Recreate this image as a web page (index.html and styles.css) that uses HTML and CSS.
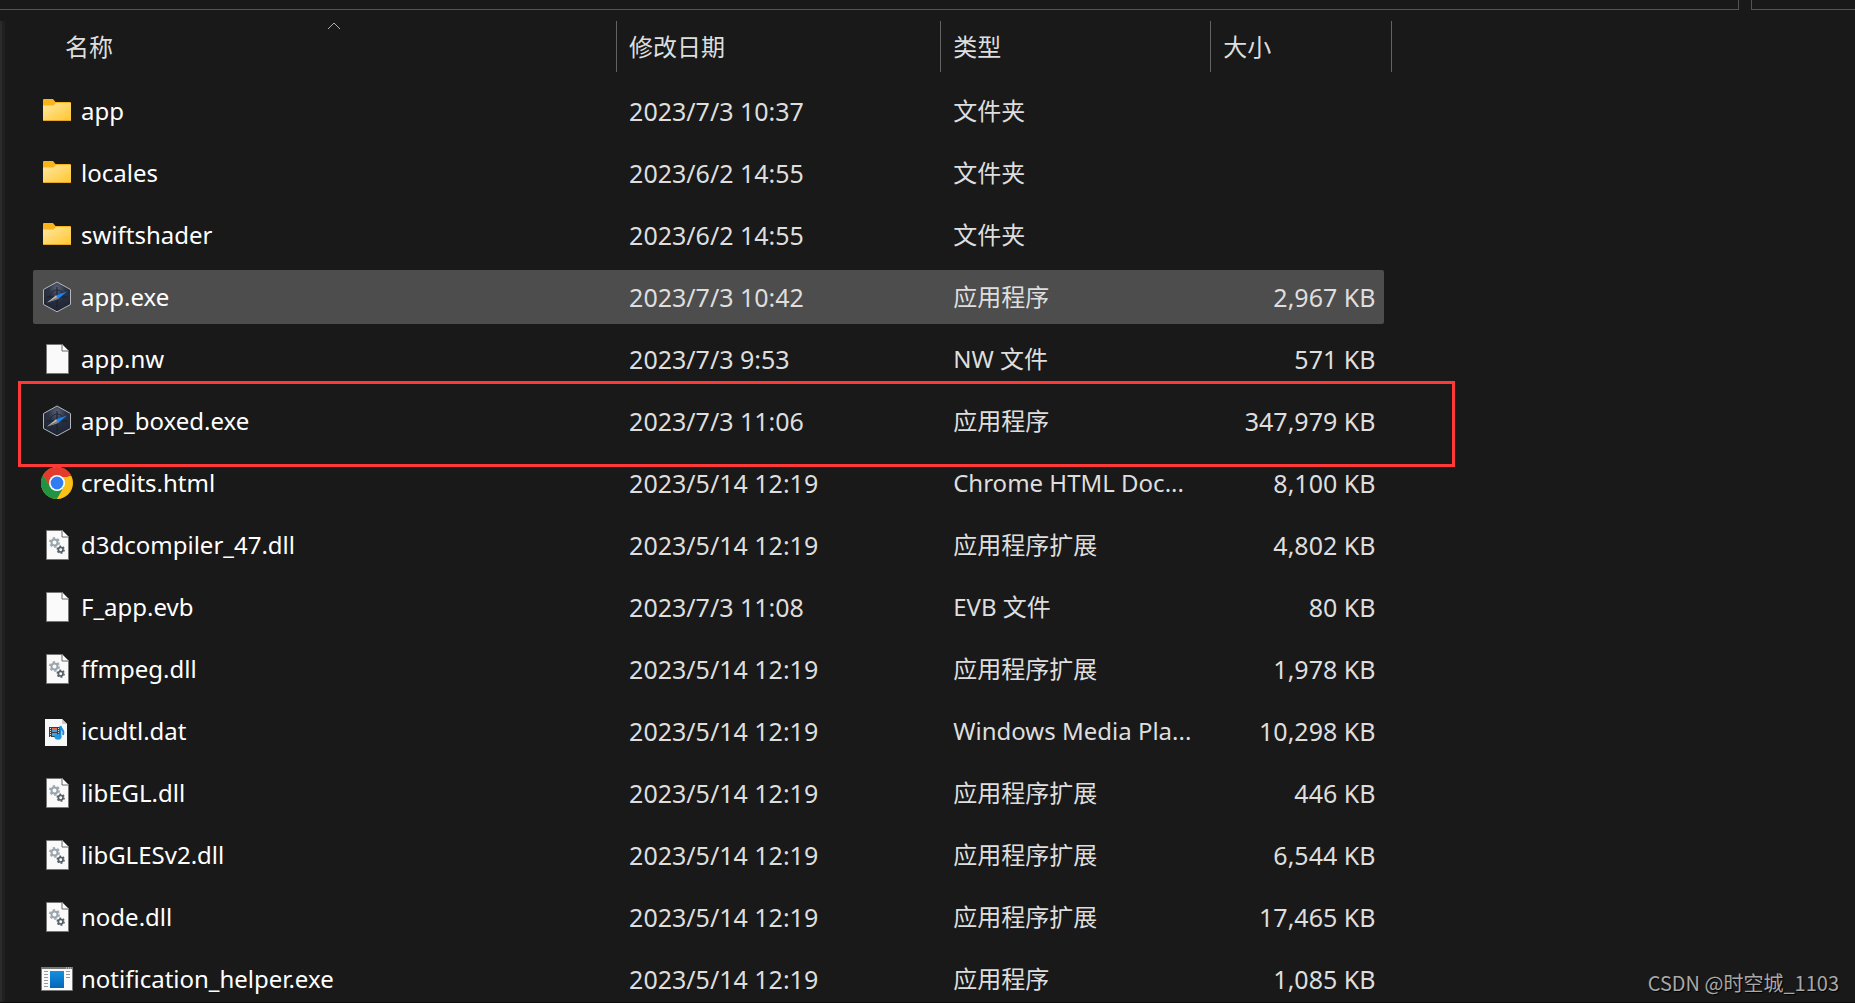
FILE: index.html
```html
<!DOCTYPE html>
<html lang="zh-CN">
<head>
	<meta charset="utf-8">
	<title>文件列表</title>
	<link rel="stylesheet" href="styles.css">
</head>
<body>
	<!-- 图标 -->
	<svg class="defs" width="0" height="0" aria-hidden="true">
		<defs>
			<linearGradient id="gFolder" x1="0" y1="0" x2="1" y2="1">
				<stop offset="0" stop-color="#ffe8a3"/>
				<stop offset="1" stop-color="#ffc62f"/>
			</linearGradient>
			<radialGradient id="gHex" cx=".5" cy=".2" r=".8">
				<stop offset="0" stop-color="#5a6279"/>
				<stop offset=".4" stop-color="#2c3344"/>
				<stop offset="1" stop-color="#1c2230"/>
			</radialGradient>
			<linearGradient id="gBlue" x1="0" y1="0" x2="0" y2="1">
				<stop offset="0" stop-color="#1490df"/>
				<stop offset="1" stop-color="#0565b8"/>
			</linearGradient>
		</defs>
		<symbol id="folder" viewBox="0 0 32 32">
			<path d="M2 5a1 1 0 0 1 1-1h9l2.500 3H29a1 1 0 0 1 1 1v17a1 1 0 0 1-1 1H3a1 1 0 0 1-1-1z" fill="#f9b517"/>
			<path d="M2 10.500h10.500L15 8h15v16.500a1 1 0 0 1-1 1H3a1 1 0 0 1-1-1z" fill="url(#gFolder)"/>
			<path d="M2 25h28a1 1 0 0 1-1 1H3a1 1 0 0 1-1-1z" fill="#e3a52a"/>
		</symbol>
		<symbol id="nw" viewBox="0 0 32 32">
			<path d="M16 1l13.500 7.500v15L16 30.800 2.500 23.500v-15z" fill="url(#gHex)" stroke="#b4b6bb"/>
			<path d="M16 6v20M6 16h20" stroke="#151a26"/>
			<circle cx="16" cy="16" r="7" fill="none" stroke="#222939"/>
			<path d="M26 10.500L15 14.200l2.600 3.600z" fill="#1683f7"/>
			<path d="M6 21.500l9-7.300 2.600 3.600z" fill="#b9b9b5"/>
			<path d="M6 21.500l11.600-3.700-1.300-1.800z" fill="#77797a"/>
		</symbol>
		<symbol id="file" viewBox="0 0 32 32">
			<path d="M5.500 1.500h16l6 6v23h-22z" fill="#fafafa" stroke="#777"/>
			<path d="M21 1v7h7" fill="#fff" stroke="#666"/>
			<path d="M22 0h7v7z" fill="#191919"/>
			<path d="M21.500 1.500l6 6" stroke="#777"/>
		</symbol>
		<symbol id="dll" viewBox="0 0 32 32">
			<use href="#file"/>
			<circle cx="13.500" cy="13.500" r="4.300" fill="none" stroke="#a3adb5" stroke-width="2.400" stroke-dasharray="2.250 2.250"/>
			<circle cx="13.500" cy="13.500" r="3" fill="none" stroke="#9aa5ad" stroke-width="2"/>
			<circle cx="19.700" cy="20.700" r="3.400" fill="none" stroke="#566167" stroke-width="1.600" stroke-dasharray="1.780 1.780"/>
			<circle cx="19.700" cy="20.700" r="2.300" fill="none" stroke="#566167" stroke-width="1.700"/>
		</symbol>
		<symbol id="chrome" viewBox="0 0 32 32">
			<circle cx="16" cy="16" r="16" fill="#fbbc05"/>
			<path d="M16 16L2.140 8A16 16 0 0 1 29.860 8z" fill="#e33b2e"/>
			<path d="M16 8h13.860L30 9H16z" fill="#e33b2e"/>
			<path d="M2.140 8A16 16 0 0 0 16 32l7-12-7-4-7 4z" fill="#229342"/>
			<path d="M16 32l7-12-3-10h9.800A16 16 0 0 1 16 32z" fill="#fbc116"/>
			<path d="M2.140 8L9 20l7-12z" fill="#e33b2e"/>
			<path d="M2.140 8L9.100 20 8 24l-6-6z" fill="#229342"/>
			<circle cx="16" cy="16" r="8" fill="#fff"/>
			<circle cx="16" cy="16" r="6.400" fill="#2f7df0"/>
		</symbol>
		<symbol id="media" viewBox="0 0 32 32">
			<path d="M4 4h17l5 5v22H4z" fill="#f8f8f8"/>
			<path d="M21 4v5h5z" fill="#ccc"/>
			<path d="M8 12h11v10H8z" fill="#3a3d42"/>
			<path d="M9.500 13v9M17.500 13v9" stroke="#ddd" stroke-dasharray="1 1"/>
			<path d="M11 13h5v3h-5z" fill="#e2694c"/>
			<path d="M11 15h5v2h-5zM11 18h5v3h-5z" fill="#4a9fe0"/>
			<ellipse cx="17" cy="22" rx="3.500" ry="2.800" fill="#1f97e6"/>
			<path d="M19.500 22V11c.5 3.500 4.500 4 2.500 9" fill="none" stroke="#1f8fe0" stroke-width="1.800"/>
		</symbol>
		<symbol id="exe" viewBox="0 0 32 32">
			<path d="M.5 4.500h31v23H.5z" fill="#fafafa" stroke="#777"/>
			<path d="M0 4h32v2H0z" fill="#777"/>
			<path d="M25 5h6" stroke="#ddd" stroke-dasharray="1 1"/>
			<path d="M9 8h14v17H9z" fill="url(#gBlue)"/>
			<path d="M3 8.500h4M3 11.500h4M3 14.500h4M3 17.500h4M3 20.500h4M3 23.500h4M25 8.500h4M25 11.500h4M25 14.500h4" stroke="#999"/>
		</symbol>
	</svg>

	<div class="explorer">
		<div class="toolbar">
			<input type="text" class="address" aria-label="地址">
			<input type="search" class="search" aria-label="搜索">
		</div>
		<div class="fileList">
			<table>
				<colgroup>
					<col class="colName">
					<col class="colDate">
					<col class="colType">
					<col class="colSize">
				</colgroup>
				<thead>
					<tr>
						<th class="name" aria-sort="ascending"><button type="button">名称<svg class="sort" width="14" height="8" viewBox="0 0 14 8"><path d="M1 7l6-6 6 6" fill="none" stroke="#b0b0b0"/></svg></button></th>
						<th><button type="button">修改日期</button></th>
						<th><button type="button">类型</button></th>
						<th class="last"><button type="button">大小</button></th>
					</tr>
				</thead>
				<tbody>
					<tr>
						<td class="name"><div><svg class="icon"><use href="#folder"/></svg>app</div></td>
						<td>2023/7/3 10:37</td>
						<td class="type">文件夹</td>
						<td class="size"></td>
					</tr>
					<tr>
						<td class="name"><div><svg class="icon"><use href="#folder"/></svg>locales</div></td>
						<td>2023/6/2 14:55</td>
						<td class="type">文件夹</td>
						<td class="size"></td>
					</tr>
					<tr>
						<td class="name"><div><svg class="icon"><use href="#folder"/></svg>swiftshader</div></td>
						<td>2023/6/2 14:55</td>
						<td class="type">文件夹</td>
						<td class="size"></td>
					</tr>
					<tr class="on">
						<td class="name"><div><svg class="icon"><use href="#nw"/></svg>app.exe</div></td>
						<td>2023/7/3 10:42</td>
						<td class="type">应用程序</td>
						<td class="size">2,967 KB</td>
					</tr>
					<tr>
						<td class="name"><div><svg class="icon"><use href="#file"/></svg>app.nw</div></td>
						<td>2023/7/3 9:53</td>
						<td class="type">NW 文件</td>
						<td class="size">571 KB</td>
					</tr>
					<tr class="marked">
						<td class="name"><div><svg class="icon"><use href="#nw"/></svg>app_boxed.exe</div></td>
						<td>2023/7/3 11:06</td>
						<td class="type">应用程序</td>
						<td class="size">347,979 KB</td>
					</tr>
					<tr>
						<td class="name"><div><svg class="icon"><use href="#chrome"/></svg>credits.html</div></td>
						<td>2023/5/14 12:19</td>
						<td class="type">Chrome HTML Doc...</td>
						<td class="size">8,100 KB</td>
					</tr>
					<tr>
						<td class="name"><div><svg class="icon"><use href="#dll"/></svg>d3dcompiler_47.dll</div></td>
						<td>2023/5/14 12:19</td>
						<td class="type">应用程序扩展</td>
						<td class="size">4,802 KB</td>
					</tr>
					<tr>
						<td class="name"><div><svg class="icon"><use href="#file"/></svg>F_app.evb</div></td>
						<td>2023/7/3 11:08</td>
						<td class="type">EVB 文件</td>
						<td class="size">80 KB</td>
					</tr>
					<tr>
						<td class="name"><div><svg class="icon"><use href="#dll"/></svg>ffmpeg.dll</div></td>
						<td>2023/5/14 12:19</td>
						<td class="type">应用程序扩展</td>
						<td class="size">1,978 KB</td>
					</tr>
					<tr>
						<td class="name"><div><svg class="icon"><use href="#media"/></svg>icudtl.dat</div></td>
						<td>2023/5/14 12:19</td>
						<td class="type">Windows Media Pla...</td>
						<td class="size">10,298 KB</td>
					</tr>
					<tr>
						<td class="name"><div><svg class="icon"><use href="#dll"/></svg>libEGL.dll</div></td>
						<td>2023/5/14 12:19</td>
						<td class="type">应用程序扩展</td>
						<td class="size">446 KB</td>
					</tr>
					<tr>
						<td class="name"><div><svg class="icon"><use href="#dll"/></svg>libGLESv2.dll</div></td>
						<td>2023/5/14 12:19</td>
						<td class="type">应用程序扩展</td>
						<td class="size">6,544 KB</td>
					</tr>
					<tr>
						<td class="name"><div><svg class="icon"><use href="#dll"/></svg>node.dll</div></td>
						<td>2023/5/14 12:19</td>
						<td class="type">应用程序扩展</td>
						<td class="size">17,465 KB</td>
					</tr>
					<tr>
						<td class="name"><div><svg class="icon"><use href="#exe"/></svg>notification_helper.exe</div></td>
						<td>2023/5/14 12:19</td>
						<td class="type">应用程序</td>
						<td class="size">1,085 KB</td>
					</tr>
				</tbody>
			</table>
		</div>
		<p class="watermark">CSDN @时空城_1103</p>
	</div>
</body>
</html>
```
FILE: styles.css
```css
* {margin:0; padding:0; box-sizing:border-box;}
body {color:#dedede; font-family:"Noto Sans", "Noto Sans CJK SC", sans-serif; font-size:25px; background:#191919;}
.defs {position:absolute;}
.explorer {position:relative; height:100vh; overflow:hidden; border-bottom:1px solid #0c0c0c;}

/* 地址栏 */
.toolbar {display:flex; gap:12px; height:10px;}
.toolbar input {height:10px; color:#fff; border:1px solid #535353; border-top:0; background:none; outline:0;}
.toolbar .address {flex:1; border-left:0;}
.toolbar .search {width:104px; border-right:0;}

/* 文件列表 */
.fileList {display:flow-root; margin-top:11px; padding-left:31px; border-left:2px solid #2b2b2b; box-shadow:inset 3px 0 #202020;}
.fileList table {width:calc(75% - 16px); margin-top:-8px; table-layout:fixed; border-collapse:separate; border-spacing:0 8px;}
.colName {width:43.25%;}
.colDate {width:24%;}
.colType {width:20%;}
.colSize {width:12.75%;}

th {padding-bottom:4px; font-size:24px; font-weight:normal; text-align:left;}
th button {position:relative; display:block; width:100%; height:51px; padding-left:12px; color:#dedede; font:inherit; line-height:51px; text-align:left; border:0; border-right:1px solid #636363; background:none;}
th.name button {padding-left:32px;}
th.last button {width:calc(100% + 8px);}
.sort {position:absolute; top:1px; left:calc(50% + 2px);}

td {height:54px; padding-left:12px; line-height:34px; white-space:nowrap;}
td.name {padding-left:8px; color:#fff; font-size:24px; border-radius:2px 0 0 2px;}
td.name div {display:flex; align-items:center; gap:8px;}
td.type {font-size:24px;}
td.size {padding-right:8px; text-align:right; border-radius:0 2px 2px 0;}
.icon {flex:none; width:32px; height:32px;}
tr.on td {background:#4d4d4d;}

/* 标记框 */
tr.marked {position:relative;}
tr.marked .name::after {content:""; position:absolute; top:-13px; right:-71px; bottom:-19px; left:-15px; border:3px solid #ff3838; pointer-events:none;}

.watermark {position:absolute; right:16px; bottom:4px; color:#a8a8a8; font-family:"Noto Sans CJK SC", sans-serif; font-size:20px; line-height:30px; text-shadow:1px 1px 1px #000;}
```
